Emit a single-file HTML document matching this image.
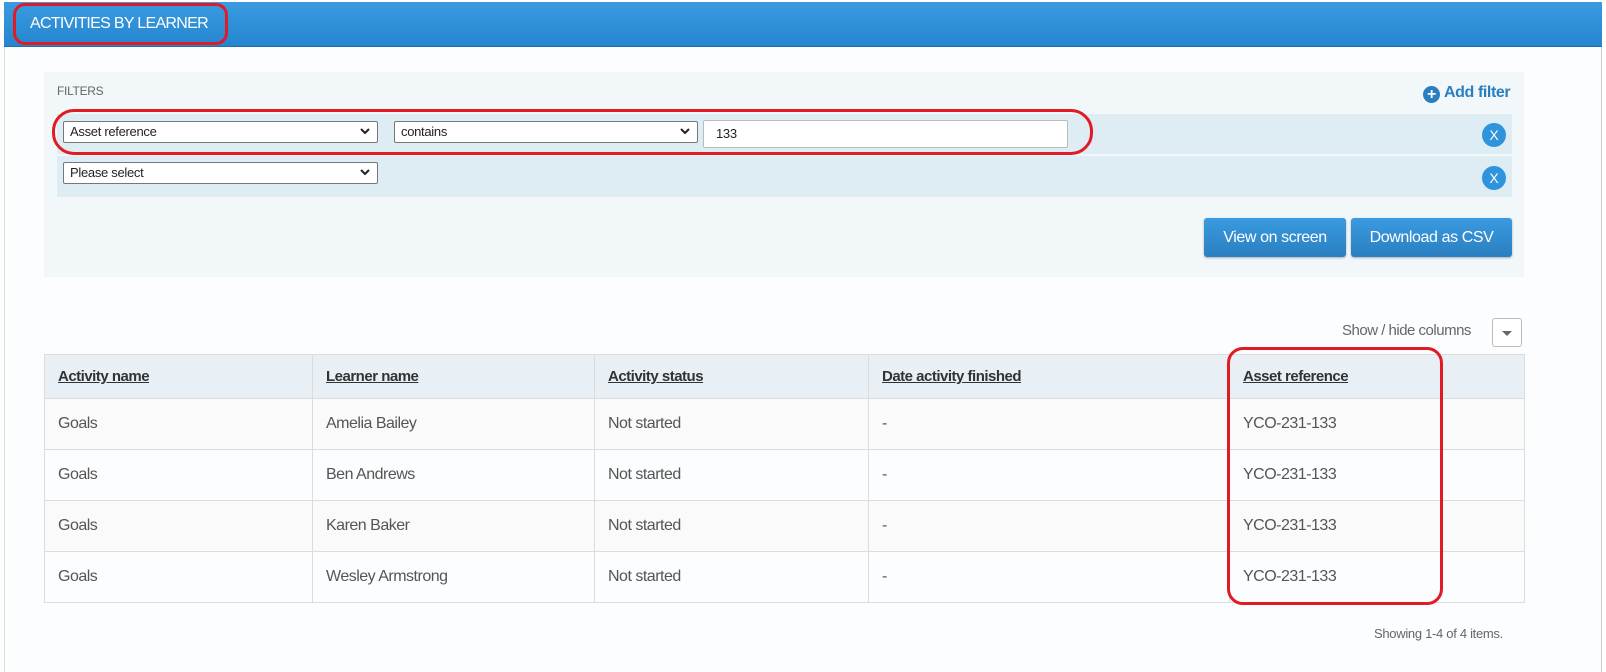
<!DOCTYPE html>
<html><head><style>
*{box-sizing:border-box;margin:0;padding:0}
body{width:1606px;height:672px;background:#fff;font-family:"Liberation Sans",sans-serif;position:relative;overflow:hidden;color:#555}
.a{position:absolute}
.hdr{left:4px;top:2px;width:1598px;height:45px;background:linear-gradient(#3a9be0,#2585cf);border-bottom:1px solid #1f6fae}
.page{left:4px;top:47px;width:1598px;height:625px;background:#fcfdfe;border-left:1px solid #ddd;border-right:1px solid #ccc}
.sel{background:#fff;border:1px solid #777;border-radius:2px;height:22px;font-size:13px;color:#222;padding:2px 6px;letter-spacing:-.3px}
.chev{position:absolute;right:6px;top:3px}
.xb{width:24px;height:24px;border-radius:50%;background:#2f94db;color:#fff;font-size:14px;text-align:center;line-height:24px}
.btn{height:39px;background:linear-gradient(#3a9be0,#2a7fc0);border-radius:3px;color:#fff;font-size:16px;text-align:center;line-height:39px;box-shadow:0 1px 2px rgba(0,0,0,.3);letter-spacing:-.4px}
table{border-collapse:collapse;font-size:16px;letter-spacing:-.5px}
td,th{border:1px solid #dcdcdc;text-align:left;padding:0 0 0 13px;font-weight:normal;color:#555}
th{background:#e8eff5;height:44px;color:#333;font-weight:bold;text-decoration:underline;font-size:15px}
td{height:51px}
tr:nth-child(even) td{background:#fafafa}
.red{border:3px solid #e01b24;border-radius:14px}
</style></head><body>
<div class="a hdr"></div>
<div class="a" style="left:30px;top:15px;color:#fff;font-size:16px;letter-spacing:-.7px">ACTIVITIES BY LEARNER</div>
<div class="a red" style="left:13px;top:3px;width:215px;height:42px;border-radius:12px"></div>
<div class="a page"></div>
<div class="a" style="left:44px;top:72px;width:1480px;height:205px;background:#f2f7fa"></div>
<div class="a" style="left:57px;top:84px;font-size:12px;color:#666;letter-spacing:-.3px">FILTERS</div>
<div class="a" style="left:1423px;top:84px;font-size:16px;font-weight:bold;color:#2a7fc0;letter-spacing:-.4px"><span style="display:inline-block;width:17px;height:17px;border-radius:50%;background:#2a7fc0;color:#fff;text-align:center;line-height:17px;font-size:16px;vertical-align:-2px;margin-right:4px">+</span>Add filter</div>
<div class="a" style="left:57px;top:114px;width:1455px;height:40px;background:#deecf4"></div>
<div class="a" style="left:57px;top:156px;width:1455px;height:41px;background:#deecf4"></div>
<div class="a sel" style="left:63px;top:121px;width:315px">Asset reference<svg class="chev" width="12" height="12" viewBox="0 0 12 12"><path d="M2 4l4 4 4-4" stroke="#222" stroke-width="2" fill="none"/></svg></div>
<div class="a sel" style="left:394px;top:121px;width:304px">contains<svg class="chev" width="12" height="12" viewBox="0 0 12 12"><path d="M2 4l4 4 4-4" stroke="#222" stroke-width="2" fill="none"/></svg></div>
<div class="a sel" style="left:703px;top:120px;width:365px;height:28px;border-color:#bbb;padding:5px 12px">133</div>
<div class="a sel" style="left:63px;top:162px;width:315px">Please select<svg class="chev" width="12" height="12" viewBox="0 0 12 12"><path d="M2 4l4 4 4-4" stroke="#222" stroke-width="2" fill="none"/></svg></div>
<div class="a red" style="left:52px;top:109px;width:1041px;height:46px;border-radius:22px"></div>
<div class="a xb" style="left:1482px;top:123px">X</div>
<div class="a xb" style="left:1482px;top:166px">X</div>
<div class="a btn" style="left:1204px;top:218px;width:142px">View on screen</div>
<div class="a btn" style="left:1351px;top:218px;width:161px">Download as CSV</div>
<div class="a" style="left:1342px;top:322px;font-size:15px;color:#666;letter-spacing:-.5px">Show / hide columns</div>
<div class="a" style="left:1492px;top:318px;width:30px;height:29px;border:1px solid #bbb;border-radius:3px;background:#fff"><svg width="28" height="27"><path d="M9 12h10l-5 5z" fill="#666"/></svg></div>
<table class="a" style="left:44px;top:354px;width:1481px">
<tr><th style="width:268px">Activity name</th><th style="width:282px">Learner name</th><th style="width:274px">Activity status</th><th style="width:361px">Date activity finished</th><th>Asset reference</th></tr>
<tr><td>Goals</td><td>Amelia Bailey</td><td>Not started</td><td>-</td><td>YCO-231-133</td></tr>
<tr><td>Goals</td><td>Ben Andrews</td><td>Not started</td><td>-</td><td>YCO-231-133</td></tr>
<tr><td>Goals</td><td>Karen Baker</td><td>Not started</td><td>-</td><td>YCO-231-133</td></tr>
<tr><td>Goals</td><td>Wesley Armstrong</td><td>Not started</td><td>-</td><td>YCO-231-133</td></tr>
</table>
<div class="a red" style="left:1227px;top:347px;width:216px;height:258px;border-radius:16px"></div>
<div class="a" style="left:1374px;top:626px;font-size:13px;color:#666;letter-spacing:-.3px">Showing 1-4 of 4 items.</div>
</body></html>
